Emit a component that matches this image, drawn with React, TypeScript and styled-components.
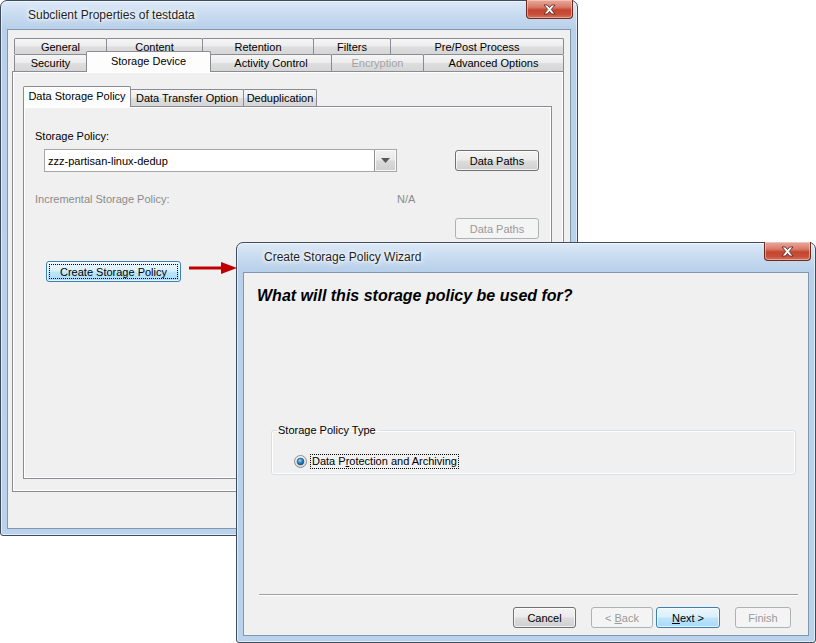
import React from 'react';
import styled, { createGlobalStyle, css } from 'styled-components';

const GlobalStyle = createGlobalStyle`
  html, body { margin: 0; padding: 0; background: #fff; }
  body {
    font-family: "Liberation Sans", Arial, sans-serif;
    font-size: 11px;
    color: #000;
  }
  * { box-sizing: border-box; }
`;

const Desktop = styled.div`
  position: relative;
  width: 816px;
  height: 643px;
  overflow: hidden;
  background: #fff;
`;

// windows float on the desktop, so they are placed by coordinates
const Window = styled.div<{ $x: number; $y: number; $w: number; $h: number; $z: number }>`
  position: absolute;
  z-index: ${p => p.$z};
  left: ${p => p.$x}px;
  top: ${p => p.$y}px;
  width: ${p => p.$w}px;
  height: ${p => p.$h}px;
  border: 1px solid #3e4c5e;
  border-radius: 7px 7px 3px 3px;
  background: linear-gradient(180deg, #dde9f7 0px, #c8dbf0 14px, #b8d0ea 28px, #bad2eb 100%);
  box-shadow: inset 0 0 0 1px rgba(255, 255, 255, 0.55);
  display: flex;
  flex-direction: column;
  padding: 0 6px 6px 6px;
`;

const TitleBar = styled.div<{ $h: number }>`
  position: relative;
  height: ${p => p.$h}px;
  display: flex;
  align-items: center;
  padding-left: 21px;
  padding-bottom: 1px;
`;

const TitleText = styled.span`
  font-family: "Liberation Sans", Arial, sans-serif;
  font-size: 12px;
  color: #1e1e1e;
  text-shadow: 0 0 8px #fff, 0 0 5px #fff, 0 0 3px #fff;
`;

const CloseButton = styled.div`
  position: absolute;
  top: -1px;
  right: -2px;
  width: 47px;
  height: 19px;
  border: 1px solid #6b2a22;
  border-top: none;
  border-radius: 0 0 4px 4px;
  background: linear-gradient(180deg, #e9aa9c 0%, #d87a6a 40%, #c5452f 55%, #c74f39 80%, #d7735c 100%);
  box-shadow: inset 0 0 0 1px rgba(255, 220, 210, 0.5);
  display: flex;
  align-items: center;
  justify-content: center;
`;

const Client = styled.div`
  flex: 1;
  background: #f0f0f0;
  border: 1px solid #8296ae;
  display: flex;
  flex-direction: column;
  min-height: 0;
`;

/* ---------- tabs ---------- */

const TabControl = styled.div<{ $m: string }>`
  display: flex;
  flex-direction: column;
  margin: ${p => p.$m};
`;

const TabRow = styled.div<{ $h: number; $pad: number }>`
  display: flex;
  align-items: flex-end;
  height: ${p => p.$h}px;
  padding-left: ${p => p.$pad}px;
`;

const Tab = styled.div<{ $w: number; $active?: boolean; $disabled?: boolean; $h?: number }>`
  width: ${p => p.$w}px;
  height: ${p => p.$h ?? 17}px;
  flex: none;
  border: 1px solid #898c95;
  border-bottom: none;
  border-radius: 2px 2px 0 0;
  margin-left: -1px;
  &:first-child { margin-left: 0; }
  background: linear-gradient(180deg, #f6f6f6 0%, #ececec 48%, #dedede 52%, #d6d6d6 100%);
  color: ${p => (p.$disabled ? '#a3a3a3' : '#000')};
  display: flex;
  align-items: center;
  justify-content: center;
  padding-top: 1px;
  white-space: nowrap;
  line-height: 13px;
  ${p =>
    p.$active &&
    css`
      position: relative;
      z-index: 2;
      height: ${(p.$h ?? 17) + 4}px;
      margin-bottom: -1px;
      background: #fdfdfd;
      align-items: flex-start;
      padding-top: 3px;
    `}
`;

const TabPanel = styled.div<{ $h: number }>`
  position: relative;
  z-index: 1;
  height: ${p => p.$h}px;
  border: 1px solid #898c95;
  background: #f0f0f0;
  box-shadow: inset 0 0 0 1px #fff;
  display: flex;
  flex-direction: column;
`;

/* ---------- controls ---------- */

const Button = styled.button<{ $w: number; $focus?: boolean; $default?: boolean }>`
  width: ${p => p.$w}px;
  height: 21px;
  flex: none;
  padding: 0;
  font-family: "Liberation Sans", Arial, sans-serif;
  font-size: 11px;
  color: #000;
  border: 1px solid #707070;
  border-radius: 3px;
  background: linear-gradient(180deg, #f3f3f3 0%, #ebebeb 48%, #dddddd 52%, #cfcfcf 100%);
  box-shadow: inset 0 0 0 1px rgba(255, 255, 255, 0.7);
  ${p =>
    (p.$focus || p.$default) &&
    css`
      border-color: #3c7fb1;
      background: linear-gradient(180deg, #eaf6fd 0%, #d9f0fc 48%, #bee6fd 52%, #a7d9f5 100%);
    `}
  ${p =>
    p.$focus &&
    css`
      outline: 1px dotted #000;
      outline-offset: -4px;
    `}
  &:disabled {
    color: #9a9a9a;
    border-color: #adb2b5;
    background: #f4f4f4;
    box-shadow: none;
  }
  u { text-decoration: underline; text-underline-offset: 1px; }
`;

const Label = styled.div<{ $muted?: boolean }>`
  line-height: 13px;
  color: ${p => (p.$muted ? '#8b8b8b' : '#000')};
  white-space: nowrap;
`;

const Combo = styled.div`
  width: 353px;
  height: 23px;
  margin-left: 9px;
  border: 1px solid #a6a6a6;
  background: #fff;
  display: flex;
  align-items: stretch;
`;

const ComboText = styled.div`
  flex: 1;
  padding-left: 3px;
  display: flex;
  align-items: center;
`;

const ComboArrow = styled.div`
  width: 22px;
  border-left: 1px solid #8e8f8f;
  background: linear-gradient(180deg, #f2f2f2 0%, #e9e9e9 48%, #d9d9d9 52%, #cfcfcf 100%);
  box-shadow: inset 0 0 0 1px rgba(255, 255, 255, 0.8);
  display: flex;
  align-items: center;
  justify-content: center;
`;

/* ---------- Data Storage Policy page ---------- */

const PolicyPane = styled.div`
  display: flex;
  flex-direction: column;
  padding: 23px 12px 0 11px;
`;

const ComboRow = styled.div`
  display: flex;
  align-items: center;
  justify-content: space-between;
  margin-top: 6px;
`;

const InfoRow = styled.div`
  display: grid;
  grid-template-columns: 362px auto;
  margin-top: 21px;
`;

const RightButton = styled.div<{ $mt: number }>`
  display: flex;
  justify-content: flex-end;
  margin-top: ${p => p.$mt}px;
`;

const CreateRow = styled.div`
  margin-top: 22px;
  padding-left: 11px;
  display: flex;
`;

/* ---------- wizard ---------- */

const Heading = styled.div`
  margin: 13px 0 0 13px;
  font-size: 16px;
  font-weight: bold;
  font-style: italic;
  line-height: 20px;
`;

const GroupBox = styled.fieldset`
  margin: 118px 12px 0 27px;
  padding: 18px 0 6px 22px;
  border: 1px solid #d5dfe5;
  border-radius: 3px;
  box-shadow: inset 0 0 0 1px #fff;
  min-width: 0;
`;

const Legend = styled.legend`
  margin-left: -17px;
  padding: 0 3px 0 1px;
  line-height: 13px;
`;

const RadioRow = styled.div`
  display: flex;
  align-items: center;
  gap: 4px;
`;

const RadioLabel = styled.span`
  line-height: 13px;
  padding: 0 1px;
  outline: 1px dotted #000;
  outline-offset: 0;
  u { text-decoration: underline; text-underline-offset: 1px; }
`;

const Spacer = styled.div`
  flex: 1;
`;

const Separator = styled.div`
  margin: 0 10px 0 15px;
  height: 2px;
  border-top: 1px solid #a0a0a0;
  border-bottom: 1px solid #fff;
`;

const ButtonBar = styled.div`
  display: flex;
  justify-content: flex-end;
  align-items: center;
  padding: 11px 17px 7px 0;
`;

const Gap = styled.div<{ $w: number }>`
  width: ${p => p.$w}px;
  flex: none;
`;

const Arrow = styled.svg`
  position: absolute;
  left: 188px;
  top: 261px;
  z-index: 5;
`;

function CloseGlyph() {
  return (
    <svg width="13" height="11" viewBox="0 0 13 11">
      <path
        d="M1 1h3.4l2.1 2.6L8.6 1H12L8.3 5.5 12 10H8.6L6.5 7.4 4.4 10H1l3.7-4.5z"
        fill="#fff"
        stroke="#5b2a24"
        strokeWidth="0.9"
        strokeLinejoin="round"
      />
    </svg>
  );
}

function RadioDot() {
  return (
    <svg width="13" height="13" viewBox="0 0 13 13">
      <defs>
        <linearGradient id="ring" x1="0" y1="0" x2="0" y2="1">
          <stop offset="0" stopColor="#f4f4f4" />
          <stop offset="1" stopColor="#d6d6d6" />
        </linearGradient>
        <radialGradient id="dot" cx="0.4" cy="0.35" r="0.7">
          <stop offset="0" stopColor="#9fd7fb" />
          <stop offset="0.5" stopColor="#2f86c8" />
          <stop offset="1" stopColor="#174e7d" />
        </radialGradient>
      </defs>
      <circle cx="6.5" cy="6.5" r="6" fill="url(#ring)" stroke="#8e8f8f" />
      <circle cx="6.5" cy="6.5" r="3.4" fill="url(#dot)" stroke="#1d4b73" strokeWidth="0.6" />
    </svg>
  );
}

function DownTriangle() {
  return (
    <svg width="9" height="5" viewBox="0 0 9 5">
      <path d="M0 0h9L4.5 5z" fill="#5a5a5a" />
    </svg>
  );
}

const topTabs = [
  { label: 'General', w: 93 },
  { label: 'Content', w: 97 },
  { label: 'Retention', w: 112 },
  { label: 'Filters', w: 78 },
  { label: 'Pre/Post Process', w: 174 },
];

const bottomTabs = [
  { label: 'Security', w: 73 },
  { label: 'Storage Device', w: 125, active: true },
  { label: 'Activity Control', w: 122 },
  { label: 'Encryption', w: 93, disabled: true },
  { label: 'Advanced Options', w: 141 },
];

const innerTabs = [
  { label: 'Data Storage Policy', w: 108, active: true },
  { label: 'Data Transfer Option', w: 114 },
  { label: 'Deduplication', w: 74 },
];

function SubclientWindow() {
  return (
    <Window $x={0} $y={0} $w={578} $h={536} $z={1}>
      <TitleBar $h={28}>
        <TitleText>Subclient Properties of testdata</TitleText>
        <CloseButton>
          <CloseGlyph />
        </CloseButton>
      </TitleBar>
      <Client>
        <TabControl $m="8px 6px 0 4px">
          <TabRow $h={16} $pad={2}>
            {topTabs.map(t => (
              <Tab key={t.label} $w={t.w} $h={16}>
                {t.label}
              </Tab>
            ))}
          </TabRow>
          <TabRow $h={17} $pad={2}>
            {bottomTabs.map(t => (
              <Tab key={t.label} $w={t.w} $active={t.active} $disabled={t.disabled}>
                {t.label}
              </Tab>
            ))}
          </TabRow>
          <TabPanel $h={421}>
            <TabControl $m="17px 11px 0 10px">
              <TabRow $h={17} $pad={0}>
                {innerTabs.map(t => (
                  <Tab key={t.label} $w={t.w} $active={t.active}>
                    {t.label}
                  </Tab>
                ))}
              </TabRow>
              <TabPanel $h={373}>
                <PolicyPane>
                  <Label>Storage Policy:</Label>
                  <ComboRow>
                    <Combo>
                      <ComboText>zzz-partisan-linux-dedup</ComboText>
                      <ComboArrow>
                        <DownTriangle />
                      </ComboArrow>
                    </Combo>
                    <Button $w={84}>Data Paths</Button>
                  </ComboRow>
                  <InfoRow>
                    <Label $muted>Incremental Storage Policy:</Label>
                    <Label $muted>N/A</Label>
                  </InfoRow>
                  <RightButton $mt={12}>
                    <Button $w={84} disabled>
                      Data Paths
                    </Button>
                  </RightButton>
                  <CreateRow>
                    <Button $w={135} $focus>
                      Create Storage Policy
                    </Button>
                  </CreateRow>
                </PolicyPane>
              </TabPanel>
            </TabControl>
          </TabPanel>
        </TabControl>
      </Client>
    </Window>
  );
}

function WizardWindow() {
  return (
    <Window $x={236} $y={242} $w={580} $h={401} $z={2}>
      <TitleBar $h={29}>
        <TitleText>Create Storage Policy Wizard</TitleText>
        <CloseButton>
          <CloseGlyph />
        </CloseButton>
      </TitleBar>
      <Client>
        <Heading>What will this storage policy be used for?</Heading>
        <GroupBox>
          <Legend>Storage Policy Type</Legend>
          <RadioRow>
            <RadioDot />
            <RadioLabel>
              Data P<u>r</u>otection and Archiving
            </RadioLabel>
          </RadioRow>
        </GroupBox>
        <Spacer />
        <Separator />
        <ButtonBar>
          <Button $w={63}>Cancel</Button>
          <Gap $w={15} />
          <Button $w={62} disabled>
            &lt; <u>B</u>ack
          </Button>
          <Gap $w={3} />
          <Button $w={64} $default>
            <u>N</u>ext &gt;
          </Button>
          <Gap $w={15} />
          <Button $w={56} disabled>
            Finish
          </Button>
        </ButtonBar>
      </Client>
    </Window>
  );
}

export default function App() {
  return (
    <Desktop>
      <GlobalStyle />
      <SubclientWindow />
      <WizardWindow />
      <Arrow width="50" height="14" viewBox="0 0 50 14">
        <path d="M1 7h34" stroke="#c00000" strokeWidth="3" />
        <path d="M33 1l16 6-16 6z" fill="#c00000" />
      </Arrow>
    </Desktop>
  );
}
